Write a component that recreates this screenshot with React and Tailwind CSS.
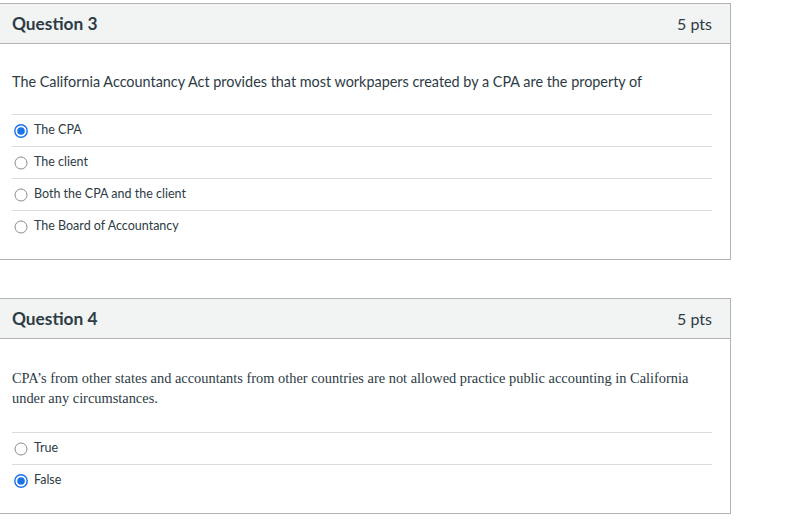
import React from "react";

function Radio({ checked }) {
  return (
    <svg width="14" height="14" viewBox="0 0 14 14" className="shrink-0">
      {checked ? (
        <>
          <circle cx="7" cy="7" r="6.2" fill="#fff" stroke="#1a73e8" strokeWidth="1.4" />
          <circle cx="7" cy="7" r="3.8" fill="#1a73e8" />
        </>
      ) : (
        <circle cx="7" cy="7" r="6" fill="#fff" stroke="#8c8c8c" strokeWidth="1" />
      )}
    </svg>
  );
}

function Card({ title, pts, children, answers, bodyClass, listClass }) {
  return (
    <div className="w-[731px] border-y border-r border-[#b3b3b3] bg-white">
      <div className="flex h-[40px] items-center justify-between border-b border-[#b3b3b3] bg-[#f2f3f3] pl-[12px] pr-[18px] text-[#2d3b45]">
        <span className="text-[17.3px] font-bold">{title}</span>
        <span className="text-[16px]">{pts}</span>
      </div>
      <div className={"pl-[12px] pr-[18px] " + bodyClass}>
        {children}
        <div className={listClass}>
          {answers.map((a, i) => (
            <div
              key={i}
              className="flex h-[32px] items-center gap-[6px] border-t border-[#dcdcdc] pl-[2px] text-[12.5px] text-[#2d3b45]"
            >
              <Radio checked={a.checked} />
              <span>{a.label}</span>
            </div>
          ))}
        </div>
      </div>
    </div>
  );
}

export default function App() {
  return (
    <div className="min-h-[530px] w-[792px] bg-white pt-[3px]" style={{ fontFamily: "Lato, 'Noto Sans', sans-serif" }}>
      <Card
        title="Question 3"
        pts="5 pts"
        bodyClass="pt-[28px] pb-[17px]"
        listClass="mt-[22px]"
        answers={[
          { label: "The CPA", checked: true },
          { label: "The client" },
          { label: "Both the CPA and the client" },
          { label: "The Board of Accountancy" },
        ]}
      >
        <p className="text-[14.4px] leading-[20px] text-[#2d3b45]">
          The California Accountancy Act provides that most workpapers created by a CPA are the property of
        </p>
      </Card>
      <div className="h-[38px]" />
      <Card
        title="Question 4"
        pts="5 pts"
        bodyClass="pt-[29px] pb-[17px]"
        listClass="mt-[24px]"
        answers={[{ label: "True" }, { label: "False", checked: true }]}
      >
        <p
          className="text-[14.4px] leading-[20px] text-[#2d3b45]"
          style={{ fontFamily: "'Liberation Serif', serif" }}
        >
          CPA’s from other states and accountants from other countries are not allowed practice public accounting in California
          <br />
          under any circumstances.
        </p>
      </Card>
    </div>
  );
}
